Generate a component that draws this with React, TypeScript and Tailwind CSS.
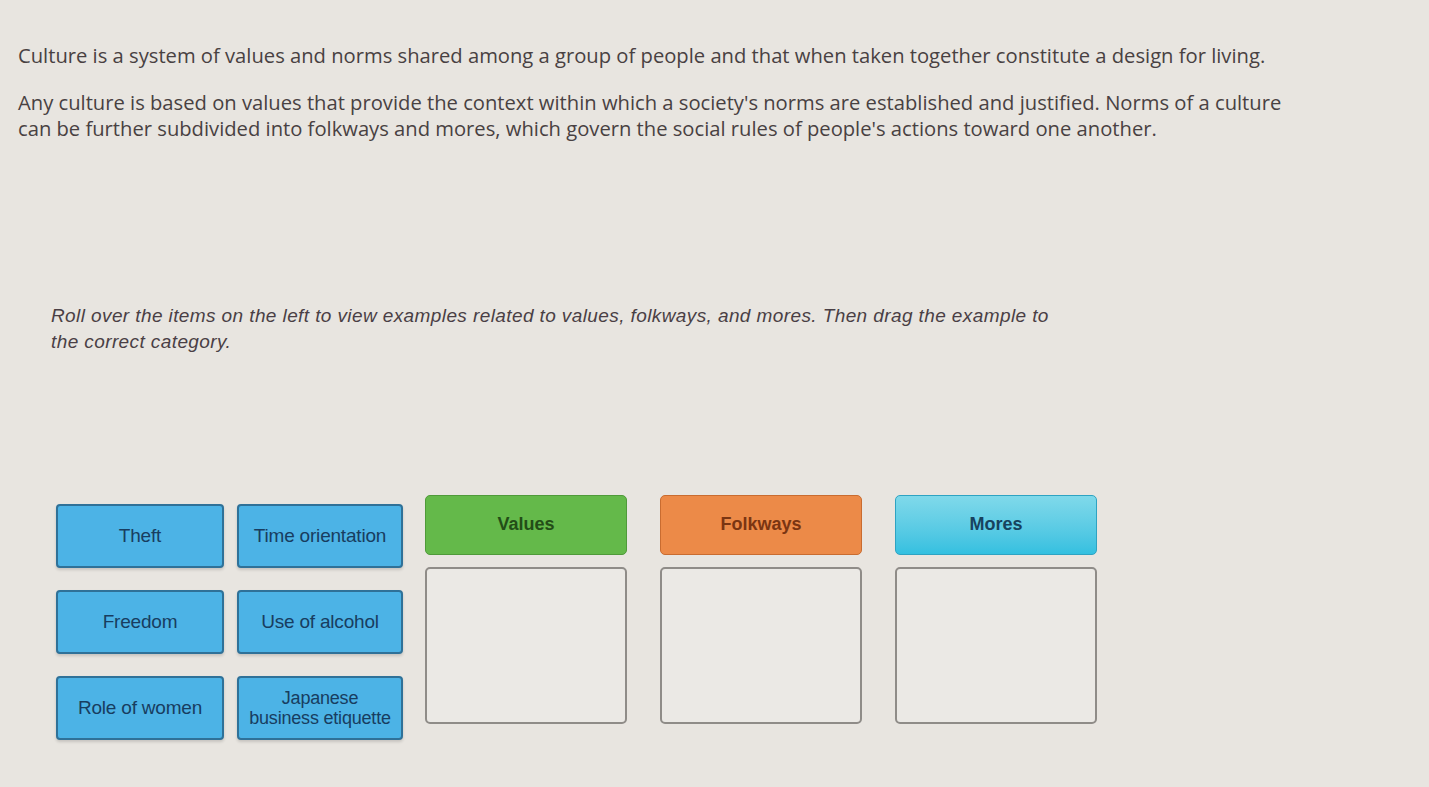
export default function App() {
  const items = [
    "Theft",
    "Time orientation",
    "Freedom",
    "Use of alcohol",
    "Role of women",
    "Japanese business etiquette",
  ];

  const categories = [
    {
      name: "Values",
      head: "bg-[#64b94a] border-[#4f9a3a] text-[#234d17]",
    },
    {
      name: "Folkways",
      head: "bg-[#ec8a48] border-[#c96c30] text-[#7a3512]",
    },
    {
      name: "Mores",
      head: "bg-gradient-to-b from-[#7fd9ea] to-[#33c0e0] border-[#2ea3c2] text-[#17425e]",
    },
  ];

  return (
    <div className="min-h-[787px] w-full bg-[#e8e5e0] font-['Open_Sans',sans-serif] text-[#484142]">
      <div className="px-[18px] pt-[42px] text-[20.2px] font-medium leading-[26px]">
        <p>
          Culture is a system of values and norms shared among a group of people and that when taken
          together constitute a design for living.
        </p>
        <p className="mt-[21px]">
          Any culture is based on values that provide the context within which a society's norms are
          established and justified. Norms of a culture
          <br />
          can be further subdivided into folkways and mores, which govern the social rules of
          people's actions toward one another.
        </p>
      </div>

      <p className="ml-[51px] mt-[162px] font-['Liberation_Sans',Arial,sans-serif] text-[19px] italic leading-[26px] tracking-[0.4px] text-[#4a3f45]">
        Roll over the items on the left to view examples related to values, folkways, and mores.
        Then drag the example to
        <br />
        the correct category.
      </p>

      <div className="ml-[56px] mt-[140px] flex items-start font-['Liberation_Sans',Arial,sans-serif]">
        <div className="mt-[9px] grid grid-cols-[168px_166px] gap-x-[13px] gap-y-[22px]">
          {items.map((item) => (
            <div
              key={item}
              className="flex h-[64px] items-center justify-center rounded-[4px] border-2 border-[#2f7198] bg-[#4cb3e6] px-2 text-center text-[19px] leading-[20px] tracking-[-0.2px] text-[#183d60] shadow-[0_2px_3px_rgba(0,0,0,0.15)]"
            >
              {item === "Japanese business etiquette" ? (
                <span className="text-[18px]">
                  Japanese
                  <br />
                  business etiquette
                </span>
              ) : (
                item
              )}
            </div>
          ))}
        </div>

        <div className="ml-[22px] flex gap-[33px]">
          {categories.map((c) => (
            <div key={c.name} className="flex w-[202px] flex-col gap-[12px]">
              <div
                className={`flex h-[60px] items-center justify-center rounded-[5px] border pb-[2px] text-[18px] font-bold ${c.head}`}
              >
                {c.name}
              </div>
              <div className="h-[157px] rounded-[5px] border-2 border-[#8f8c88] bg-[#ebe9e5]" />
            </div>
          ))}
        </div>
      </div>
    </div>
  );
}
